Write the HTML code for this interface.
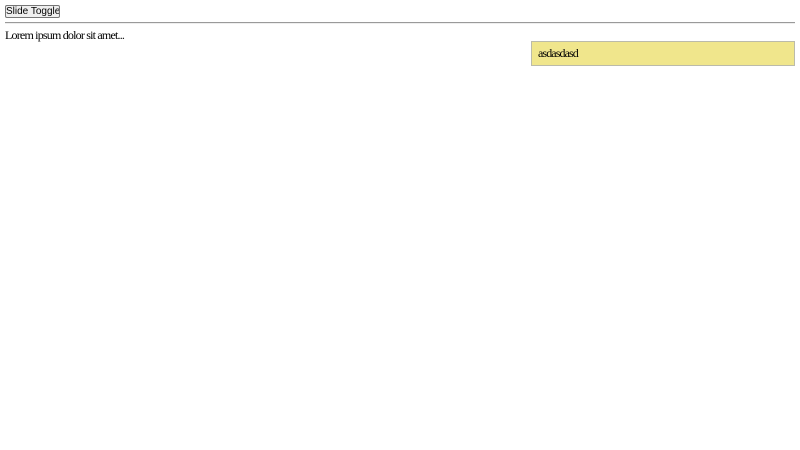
<!DOCTYPE html>
<html><head><style>
body{margin:0;font-family:"Liberation Serif",serif;font-size:13px;}
button{position:absolute;left:5px;top:5px;width:55px;height:13px;padding:0;font:10px "Liberation Sans",sans-serif;white-space:nowrap;background:#efefef;border:1px solid #767676;border-radius:2px;line-height:11px;color:#000;overflow:hidden}
.hr{position:absolute;left:5px;top:22px;width:790px;height:0;border-top:1px solid #9a9a9a;border-bottom:1px solid #eee}
.p{position:absolute;left:5px;top:27px;line-height:16px;font-size:12px;letter-spacing:-0.8px;white-space:nowrap}
.box{position:absolute;left:531px;top:41px;width:262px;height:23px;background:#f0e68c;border:1px solid #bba;box-sizing:content-box}
.box span{position:absolute;left:6px;top:4px;font-size:12px;line-height:15px;letter-spacing:-0.9px}
</style></head><body>
<button>Slide Toggle</button>
<div class="hr"></div>
<div class="p">Lorem ipsum dolor sit amet...</div>
<div class="box"><span>asdasdasd</span></div>
</body></html>
